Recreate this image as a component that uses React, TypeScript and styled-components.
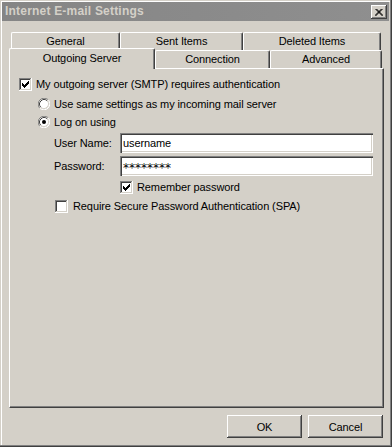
import React from "react";
import styled, { createGlobalStyle } from "styled-components";

const Global = createGlobalStyle`
  html, body { margin: 0; padding: 0; background: #d4d0c8; }
  body {
    font-family: "Liberation Sans", Arial, sans-serif;
    font-size: 11px;
    letter-spacing: -0.1px;
    color: #000;
  }
  * { box-sizing: border-box; }
`;

const Window = styled.div`
  width: 392px;
  height: 447px;
  background: #d4d0c8;
  padding: 2px 3px 3px 2px;
  display: flex;
  flex-direction: column;
  overflow: hidden;
  box-shadow: inset -1px -1px 0 #404040, inset -2px -2px 0 #808080,
    inset 1px 1px 0 #d4d0c8, inset 2px 2px 0 #ffffff;
`;

const TitleBar = styled.div`
  height: 19px;
  flex: none;
  display: flex;
  align-items: flex-start;
  justify-content: space-between;
  padding: 0 2px 0 3px;
  background: linear-gradient(to right, #858585, #8f8f8f);
`;

const TitleText = styled.div`
  font-weight: bold;
  font-size: 12px;
  letter-spacing: 0.2px;
  line-height: 19px;
  color: #d4d0c8;
  white-space: nowrap;
`;

const CloseButton = styled.div`
  width: 16px;
  height: 14px;
  margin-top: 3px;
  background: #d4d0c8;
  display: flex;
  align-items: center;
  justify-content: center;
  box-shadow: inset -1px -1px 0 #404040, inset 1px 1px 0 #ffffff,
    inset -2px -2px 0 #808080;
`;

const Body = styled.div`
  flex: 1;
  display: flex;
  flex-direction: column;
  padding: 11px 0 0 7px;
`;

const TabRow = styled.div<{ $back?: boolean }>`
  display: flex;
  align-items: flex-end;
  height: ${(p) => (p.$back ? 18 : 20)}px;
  margin-left: ${(p) => (p.$back ? 2 : 0)}px;
  margin-top: ${(p) => (p.$back ? 0 : -2)}px;
  position: relative;
  z-index: ${(p) => (p.$back ? 1 : 2)};
`;

const Tab = styled.div<{ $w: number; $active?: boolean }>`
  width: ${(p) => p.$w}px;
  height: ${(p) => (p.$active ? 21 : 18)}px;
  margin-bottom: ${(p) => (p.$active ? -1 : 0)}px;
  background: #d4d0c8;
  border-top: 1px solid #ffffff;
  border-left: 1px solid #ffffff;
  border-right: 1px solid #404040;
  border-radius: 2px 2px 0 0;
  box-shadow: inset -1px 0 0 #808080;
  display: flex;
  align-items: center;
  justify-content: center;
  padding-bottom: ${(p) => (p.$active ? 3 : 1)}px;
  white-space: nowrap;
  position: relative;
  z-index: ${(p) => (p.$active ? 3 : 1)};
`;

const Panel = styled.div`
  width: 375px;
  height: 340px;
  flex: none;
  border-top: 1px solid #ffffff;
  border-left: 1px solid #ffffff;
  border-right: 1px solid #404040;
  border-bottom: 1px solid #404040;
  box-shadow: inset -1px -1px 0 #808080;
  padding: 7px 0 0 9px;
  display: flex;
  flex-direction: column;
  position: relative;
  z-index: 1;
`;

const Row = styled.div<{ $indent: number; $top: number; $h?: number }>`
  display: flex;
  align-items: center;
  height: ${(p) => p.$h ?? 16}px;
  margin-left: ${(p) => p.$indent}px;
  margin-top: ${(p) => p.$top}px;
  white-space: nowrap;
`;

const Label = styled.span<{ $gap?: number }>`
  margin-left: ${(p) => p.$gap ?? 4}px;
`;

const FieldLabel = styled.span`
  width: 66px;
  flex: none;
`;

const Input = styled.div<{ $secret?: boolean }>`
  width: 253px;
  height: 20px;
  background: #ffffff;
  padding: ${(p) => (p.$secret ? "3px 0 0 3px" : "0 0 0 3px")};
  display: flex;
  align-items: center;
  font-family: ${(p) =>
    p.$secret ? '"DejaVu Sans", sans-serif' : '"Liberation Sans", Arial, sans-serif'};
  font-size: ${(p) => (p.$secret ? 12 : 11)}px;
  letter-spacing: ${(p) => (p.$secret ? 0 : -0.1)}px;
  box-shadow: inset 1px 1px 0 #808080, inset 2px 2px 0 #404040,
    inset -1px -1px 0 #ffffff, inset -2px -2px 0 #d4d0c8;
`;

const Footer = styled.div`
  display: flex;
  justify-content: flex-end;
  gap: 6px;
  margin-top: 7px;
  padding-right: 6px;
`;

const Button = styled.div`
  width: 75px;
  height: 23px;
  background: #d4d0c8;
  display: flex;
  align-items: center;
  justify-content: center;
  box-shadow: inset -1px -1px 0 #404040, inset 1px 1px 0 #ffffff,
    inset -2px -2px 0 #808080;
`;

const Box = styled.svg`
  flex: none;
  display: block;
`;

const CHECK = [
  [0, 2],
  [1, 3],
  [2, 4],
  [3, 3],
  [4, 2],
  [5, 1],
  [6, 0],
];

function CheckBox({ checked }: { checked?: boolean }) {
  return (
    <Box width={13} height={13} viewBox="0 0 13 13">
      <rect x={0} y={0} width={13} height={13} fill="#ffffff" />
      <rect x={0} y={0} width={12} height={1} fill="#808080" />
      <rect x={0} y={0} width={1} height={12} fill="#808080" />
      <rect x={1} y={1} width={10} height={1} fill="#404040" />
      <rect x={1} y={1} width={1} height={10} fill="#404040" />
      <rect x={1} y={11} width={11} height={1} fill="#d4d0c8" />
      <rect x={11} y={1} width={1} height={11} fill="#d4d0c8" />
      {checked &&
        CHECK.map(([x, y]) => (
          <rect key={x} x={3 + x} y={3 + y} width={1} height={3} fill="#000" />
        ))}
    </Box>
  );
}

function Radio({ checked }: { checked?: boolean }) {
  return (
    <Box width={12} height={12} viewBox="0 0 12 12">
      <circle cx={6} cy={6} r={5} fill="#ffffff" />
      <path d="M1.76 10.24 A6 6 0 0 1 10.24 1.76" stroke="#808080" strokeWidth={1} fill="none" />
      <path d="M10.24 1.76 A6 6 0 0 1 1.76 10.24" stroke="#ffffff" strokeWidth={1} fill="none" />
      <path d="M2.82 9.18 A4.5 4.5 0 0 1 9.18 2.82" stroke="#404040" strokeWidth={1} fill="none" />
      <path d="M9.18 2.82 A4.5 4.5 0 0 1 2.82 9.18" stroke="#d4d0c8" strokeWidth={1} fill="none" />
      {checked && <circle cx={6} cy={6} r={2} fill="#000" />}
    </Box>
  );
}

function CloseGlyph() {
  return (
    <svg width={8} height={7} viewBox="0 0 8 7">
      <path d="M0.5 0 L7.5 7 M1.5 0 L8 6.5 M7.5 0 L0.5 7 M6.5 0 L0 6.5" stroke="#000" strokeWidth={1} />
    </svg>
  );
}

export default function App() {
  return (
    <>
      <Global />
      <Window>
        <TitleBar>
          <TitleText>Internet E-mail Settings</TitleText>
          <CloseButton>
            <CloseGlyph />
          </CloseButton>
        </TitleBar>
        <Body>
          <TabRow $back>
            <Tab $w={109}>General</Tab>
            <Tab $w={123}>Sent Items</Tab>
            <Tab $w={138}>Deleted Items</Tab>
          </TabRow>
          <TabRow>
            <Tab $w={146} $active>
              Outgoing Server
            </Tab>
            <Tab $w={115}>Connection</Tab>
            <Tab $w={112}>Advanced</Tab>
          </TabRow>
          <Panel>
            <Row $indent={0} $top={0}>
              <CheckBox checked />
              <Label>My outgoing server (SMTP) requires authentication</Label>
            </Row>
            <Row $indent={19} $top={4}>
              <Radio />
              <Label>Use same settings as my incoming mail server</Label>
            </Row>
            <Row $indent={19} $top={2}>
              <Radio checked />
              <Label>Log on using</Label>
            </Row>
            <Row $indent={35} $top={3} $h={20}>
              <FieldLabel>User Name:</FieldLabel>
              <Input>username</Input>
            </Row>
            <Row $indent={35} $top={3} $h={20}>
              <FieldLabel>Password:</FieldLabel>
              <Input $secret>********</Input>
            </Row>
            <Row $indent={101} $top={3}>
              <CheckBox checked />
              <Label>Remember password</Label>
            </Row>
            <Row $indent={36} $top={3}>
              <CheckBox />
              <Label $gap={5}>Require Secure Password Authentication (SPA)</Label>
            </Row>
          </Panel>
          <Footer>
            <Button>OK</Button>
            <Button>Cancel</Button>
          </Footer>
        </Body>
      </Window>
    </>
  );
}
